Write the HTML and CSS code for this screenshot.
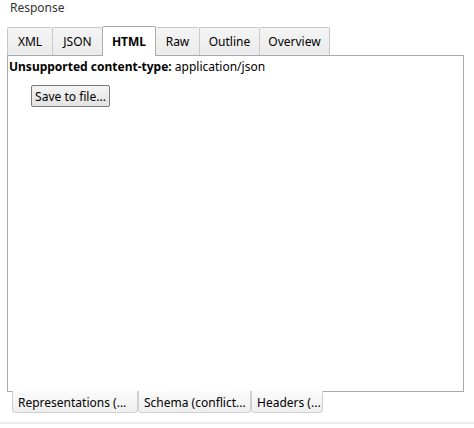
FILE: index.html
```html
<!DOCTYPE html>
<html>
<head>
<meta charset="utf-8">
<link rel="stylesheet" href="styles.css">
</head>
<body>
<div class="app">
  <div class="title">Response</div>
  <div class="tabs">
    <div class="tab t-xml">XML</div>
    <div class="tab t-json">JSON</div>
    <div class="tab t-html active">HTML</div>
    <div class="tab t-raw">Raw</div>
    <div class="tab t-outline">Outline</div>
    <div class="tab t-overview">Overview</div>
  </div>
  <div class="panel">
    <div class="msg"><b>Unsupported content-type:</b> application/json</div>
    <button class="btn">Save to file...</button>
  </div>
  <div class="btabs">
    <div class="btab b-rep">Representations (...</div>
    <div class="btab b-schema">Schema (conflict...</div>
    <div class="btab b-headers">Headers (...</div>
  </div>
  <div class="rule"></div>
</div>
</body>
</html>
```
FILE: styles.css
```css
html, body {
  margin: 0;
  padding: 0;
  background: #ffffff;
}
.app {
  width: 474px;
  height: 428px;
  font-family: "Noto Sans", "Open Sans", sans-serif;
  font-size: 12px;
  color: #000;
  display: flex;
  flex-direction: column;
}
.title {
  height: 26px;
  padding-left: 10px;
  line-height: 16px;
  color: #333;
}
.tabs {
  display: flex;
  align-items: flex-end;
  height: 29px;
  padding-left: 7px;
  position: relative;
  z-index: 1;
}
.tab {
  height: 28px;
  box-sizing: border-box;
  border: 1px solid #c9c9c9;
  border-bottom: none;
  border-right: none;
  border-radius: 2px 2px 0 0;
  background: linear-gradient(#f4f4f4, #ebebeb);
  text-align: center;
  line-height: 28px;
}
.t-xml { width: 45px; }
.t-json { width: 50px; }
.t-html { width: 54px; }
.t-raw { width: 43px; border-left: none; }
.t-outline { width: 60px; }
.t-overview { width: 71px; border-right: 1px solid #c9c9c9; }
.tab.active {
  height: 30px;
  margin-bottom: -1px;
  background: #fff;
  font-weight: bold;
  border: 1px solid #acacac;
  border-bottom: none;
  line-height: 30px;
}
.panel {
  margin-left: 7px;
  width: 457px;
  height: 337px;
  box-sizing: border-box;
  border: 1px solid #a6a9b0;
  background: #fff;
  padding: 2px 0 0 1px;
}
.msg {
  line-height: 17px;
}
.btn {
  display: block;
  margin: 10px 0 0 22px;
  width: 79px;
  height: 22px;
  font-family: inherit;
  font-size: 12px;
  background: linear-gradient(#f4f4f4, #e2e2e2);
  border: 1px solid #7a7a7a;
  border-radius: 2px;
  padding: 0;
  color: #000;
}
.btabs {
  display: flex;
  padding-left: 12px;
  margin-top: -1px;
}
.btab {
  height: 22px;
  box-sizing: border-box;
  border: 1px solid #cfcfcf;
  border-top: none;
  border-radius: 0 0 4px 4px;
  background: linear-gradient(#fbfbfb, #efefef);
  padding: 3px 0 0 5px;
  line-height: 18px;
  white-space: nowrap;
  overflow: hidden;
}
.b-rep { width: 126px; }
.b-schema { width: 113px; }
.b-headers { width: 72px; }
.rule {
  margin-top: 9px;
  height: 2px;
  background: #ececec;
}
```
